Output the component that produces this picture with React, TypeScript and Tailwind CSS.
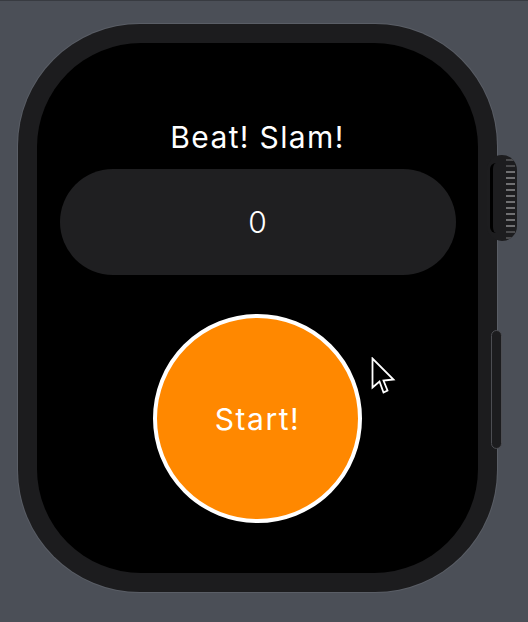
import React from "react";

const ridges = Array.from({ length: 14 }, (_, i) => i);

function Crown() {
  return (
    <div className="absolute left-[469px] top-[131px] w-[30px] h-[86px] rounded-[15px] bg-[#1d1d1f] overflow-hidden">
      {/* inner shadow curve on the left */}
      <div className="absolute left-[3px] top-[8px] w-[6px] h-[70px] rounded-l-full border-l-[3px] border-black" />
      <div className="absolute right-[2px] top-[4px] flex flex-col gap-[4px]">
        {ridges.map((i) => (
          <div
            key={i}
            className={`h-[2px] w-[9px] ${
              i < 2 || i > 11 ? "bg-[#4a4a4c]" : "bg-[#707072]"
            }`}
          />
        ))}
      </div>
    </div>
  );
}

function Cursor() {
  return (
    <svg
      className="absolute left-[371px] top-[356px]"
      width="26"
      height="40"
      viewBox="0 0 26 40"
    >
      <path
        d="M1.5 1.5 L1.5 30.5 L8.5 24.5 L12.5 35.5 L16.5 33.5 L12.5 23.5 L22.5 22.5 Z"
        fill="#000"
        stroke="#fff"
        strokeWidth="1.8"
        strokeLinejoin="miter"
      />
    </svg>
  );
}

export default function App() {
  return (
    <div
      className="relative w-[528px] h-[622px] bg-[#4b4f57] border-t border-[#383b41] overflow-hidden"
      style={{ fontFamily: "Inter, 'Noto Sans', sans-serif" }}
    >
      {/* watch body */}
      <div className="relative ml-[18px] mt-[23px] w-[479px] h-[568px] rounded-[122px] bg-[#1c1c1e] p-[19px] shadow-[0_0_0_1px_#5a5e66]">
        <Crown />
        <div className="absolute left-[473px] top-[306px] w-[11px] h-[119px] rounded-full bg-[#1c1c1e] border border-[#4c4d52]" />

        {/* screen */}
        <div className="w-full h-full rounded-[104px] bg-black flex flex-col items-center pt-[76px]">
          <div className="text-white text-[30px] leading-[36px] tracking-[0.045em]">Beat! Slam!</div>
          <div className="mt-[14px] w-[396px] h-[106px] rounded-full bg-[#1f1f21] flex items-center justify-center">
            <span className="text-white text-[30px] leading-none font-light">0</span>
          </div>
          <button className="mt-[39px] w-[209px] h-[209px] rounded-full bg-[#ff8800] border-[4px] border-white flex items-center justify-center">
            <span className="text-white text-[30px] leading-none tracking-[0.05em]">Start!</span>
          </button>
        </div>
      </div>
      <Cursor />
    </div>
  );
}
